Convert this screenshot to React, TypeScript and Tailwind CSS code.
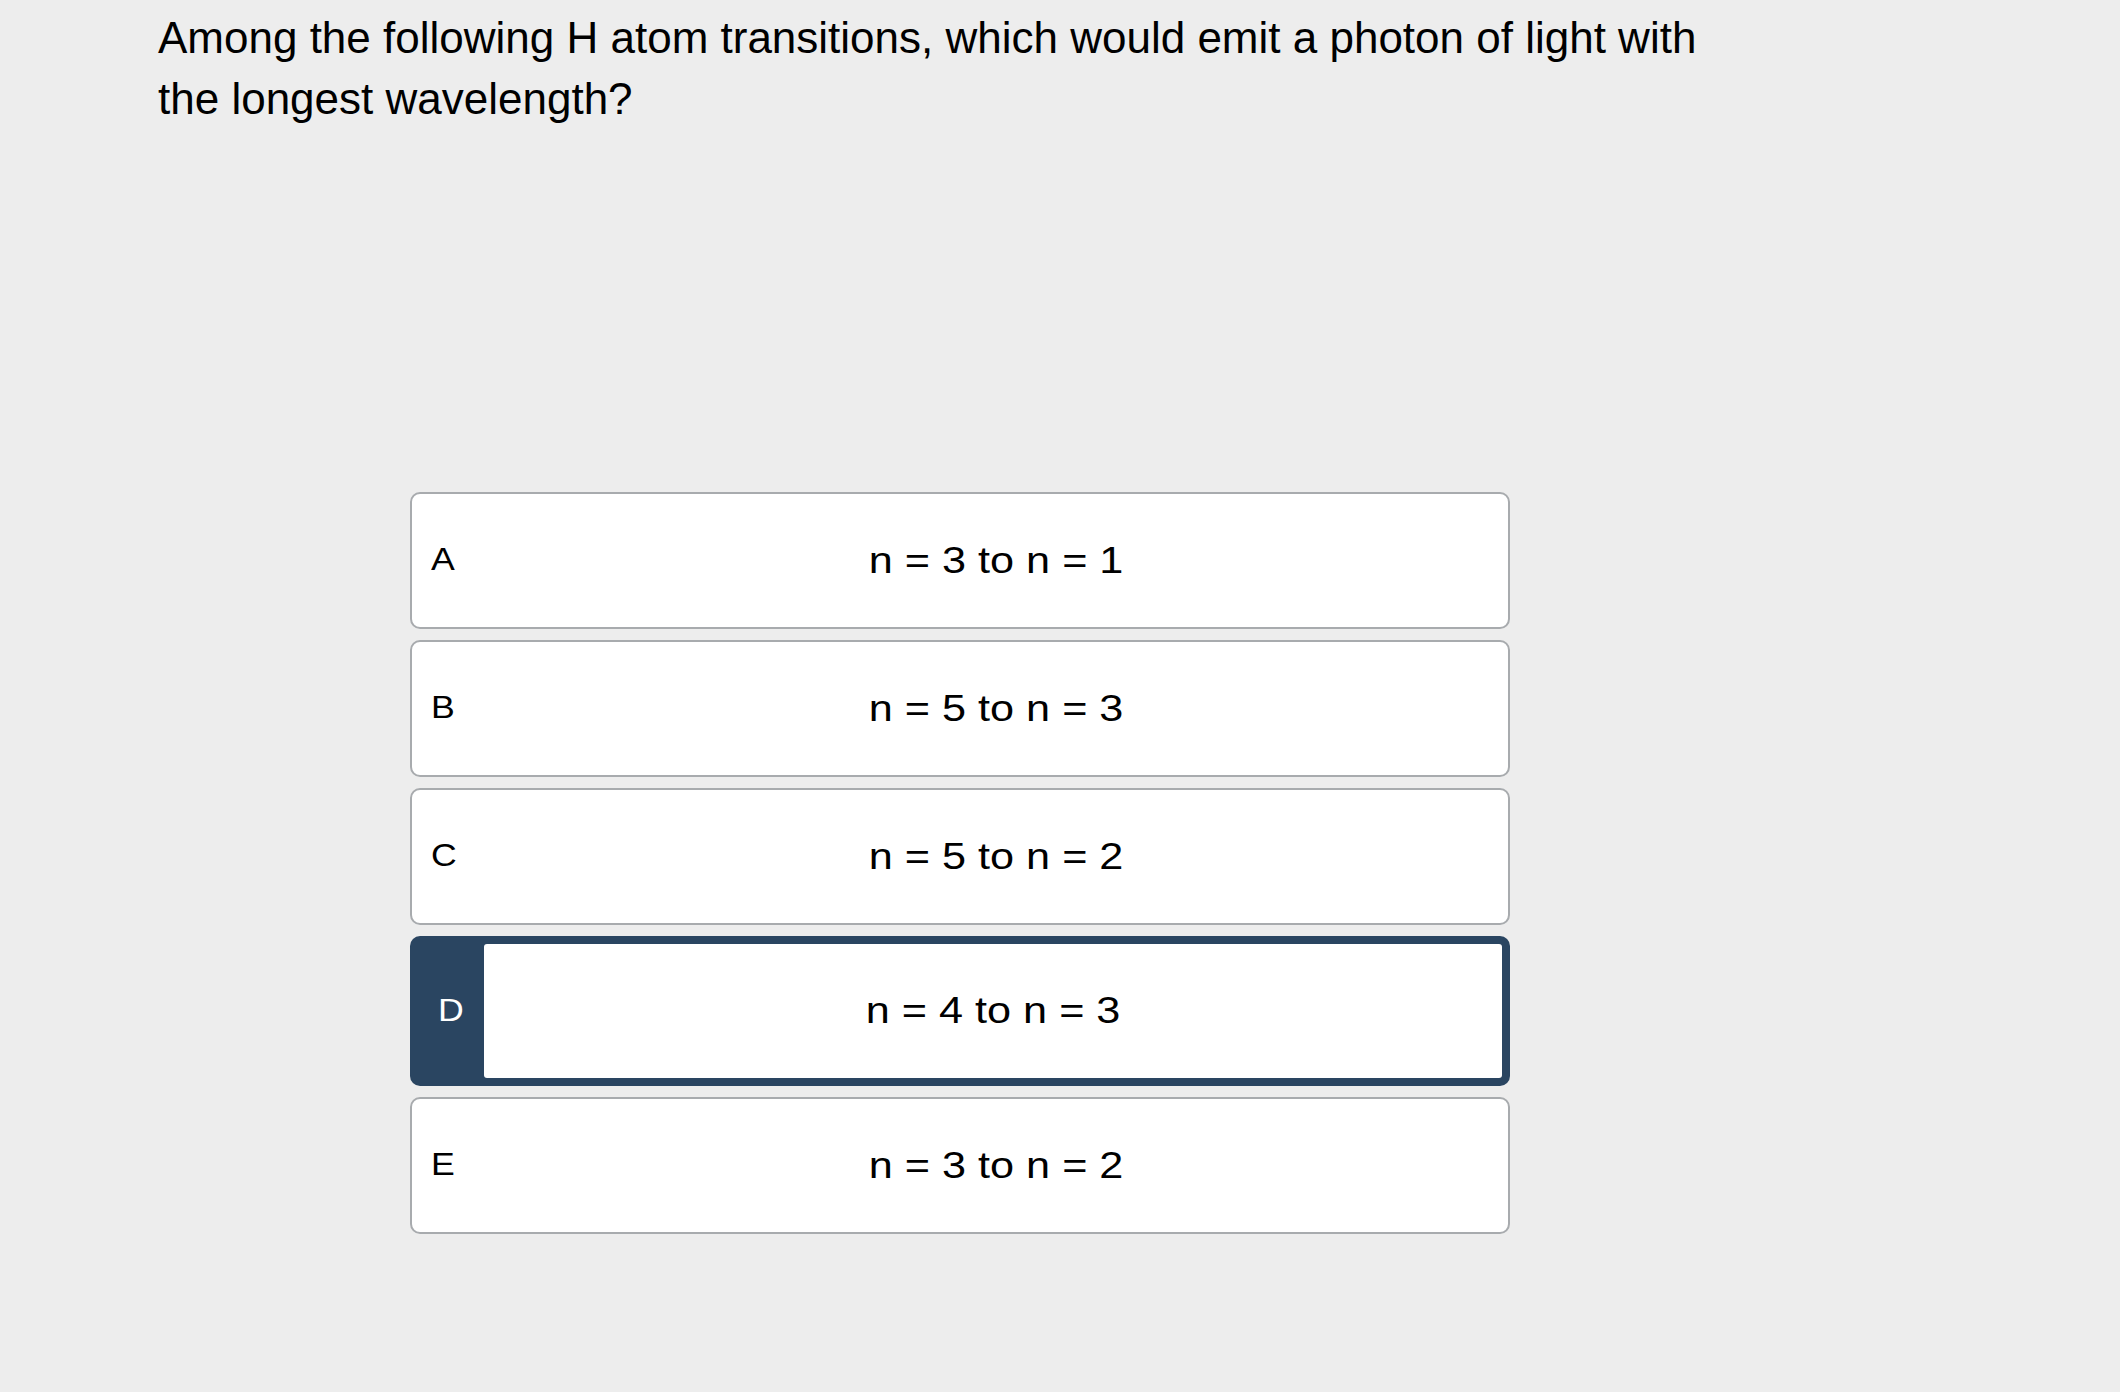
const options = [
  { id: 'A', text: 'n = 3 to n = 1' },
  { id: 'B', text: 'n = 5 to n = 3' },
  { id: 'C', text: 'n = 5 to n = 2' },
  { id: 'D', text: 'n = 4 to n = 3', selected: true },
  { id: 'E', text: 'n = 3 to n = 2' },
];

function Option({ id, text, selected }: { id: string; text: string; selected?: boolean }) {
  if (selected) {
    return (
      <div className="flex h-[150px] w-[1100px] overflow-hidden rounded-[10px] bg-[#2a4561] p-[8px] pl-0">
        <div className="flex w-[74px] shrink-0 items-center pl-[28px] text-[31px] text-white">
          <span className="inline-block origin-left scale-x-[1.15]">{id}</span>
        </div>
        <div className="flex flex-1 items-center justify-center rounded-[3px] bg-white text-[36px] text-black">
          <span className="inline-block scale-x-[1.2]">{text}</span>
        </div>
      </div>
    );
  }
  return (
    <div className="flex h-[137px] w-[1100px] rounded-[10px] border-2 border-[#a8abae] bg-white">
      <div className="flex w-[72px] shrink-0 items-center pl-[19px] text-[31px] text-black">
        <span className="inline-block origin-left scale-x-[1.15]">{id}</span>
      </div>
      <div className="flex flex-1 items-center justify-center text-[36px] text-black">
        <span className="inline-block scale-x-[1.2]">{text}</span>
      </div>
    </div>
  );
}

export default function App() {
  return (
    <div className="min-h-[1392px] w-[2120px] bg-[#ededed] font-['Liberation_Sans',Arial,sans-serif] text-black">
      <p className="w-[1740px] pl-[158px] pt-[7px] text-[44px] leading-[61px]">
        Among the following H atom transitions, which would emit a photon of light with the longest wavelength?
      </p>
      <div className="ml-[410px] mt-[363px] flex flex-col gap-[11px]">
        {options.map((o) => (
          <Option key={o.id} {...o} />
        ))}
      </div>
    </div>
  );
}
